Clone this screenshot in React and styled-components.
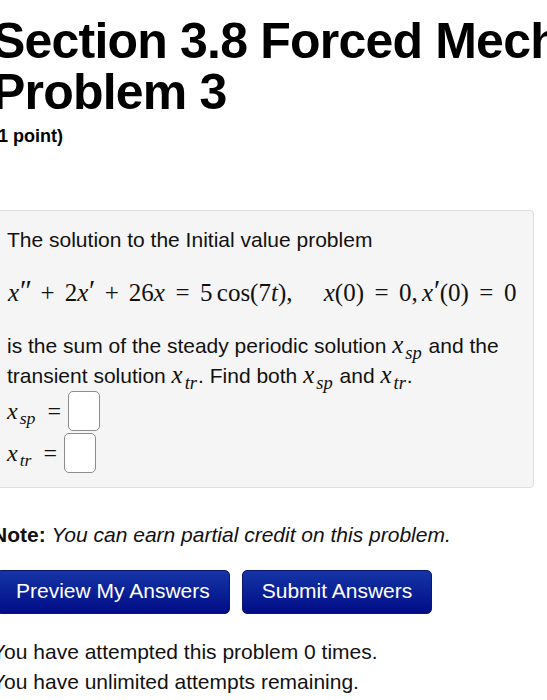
import React from "react";
import styled, { createGlobalStyle } from "styled-components";

const Global = createGlobalStyle`
  html, body {
    margin: 0;
    padding: 0;
    background: #ffffff;
    overflow: hidden;
  }
  body {
    font-family: "Liberation Sans", Arial, sans-serif;
    color: #111;
  }
`;

const Page = styled.div`
  margin-left: -8px;
  width: 542px;
`;

const Title = styled.h1`
  margin: 16px 0 0;
  font-size: 50px;
  line-height: 51px;
  font-weight: 700;
  letter-spacing: -0.8px;
  white-space: nowrap;
  color: #000;
`;

const Points = styled.div`
  margin-top: 6px;
  font-size: 18px;
  line-height: 24px;
  font-weight: 700;
  color: #000;
`;

const ProblemBox = styled.div`
  margin-top: 62px;
  background: #f5f5f5;
  border: 1px solid #dedede;
  border-radius: 4px;
  padding: 14px 14px 12px;
`;

const Text = styled.p`
  margin: 0;
  font-size: 21px;
  line-height: 30px;
`;

const Display = styled.div`
  margin: 23px 0 23px 1px;
  font-family: "Liberation Serif", "Times New Roman", serif;
  font-size: 25px;
  line-height: 30px;
  white-space: nowrap;
`;

const Mi = styled.i`
  font-family: "Liberation Serif", "Times New Roman", serif;
  font-style: italic;
`;

const Prime = styled.span`
  display: inline-block;
  margin-left: 1px;
  transform: scale(1.15);
  transform-origin: left bottom;
`;

const Sub = styled.span`
  font-family: "Liberation Serif", "Times New Roman", serif;
  font-style: italic;
  font-size: 0.74em;
  line-height: 0;
  position: relative;
  top: 0.3em;
  margin-left: 2px;
`;

const Op = styled.span`
  margin: 0 ${(p) => (p.$rel ? "0.42em" : "0.4em")};
`;

const Quad = styled.span`
  display: inline-block;
  width: ${(p) => p.$w || "1em"};
`;

const InlineMath = styled.span`
  font-family: "Liberation Serif", "Times New Roman", serif;
  font-size: 25px;
  line-height: 0;
  margin-right: 1px;
`;

const AnswerRow = styled.div`
  display: flex;
  align-items: flex-start;
  height: 42px;
`;

const AnswerLabel = styled.span`
  font-family: "Liberation Serif", "Times New Roman", serif;
  font-size: 24px;
  line-height: 36px;
  padding-top: 2px;
  white-space: nowrap;
`;

const Eq = styled.span`
  display: inline-block;
  margin: 0 7px 0 12px;
  font-style: normal;
`;

const AnswerInput = styled.span`
  display: inline-block;
  box-sizing: border-box;
  width: 32px;
  height: 40px;
  background: #fff;
  border: 1.5px solid #8c8c8c;
  border-radius: 5px;
`;

const Note = styled.p`
  margin: 32px 0 0;
  font-size: 21px;
  line-height: 30px;
  b {
    font-weight: 700;
  }
  i {
    font-style: italic;
  }
`;

const Buttons = styled.div`
  display: flex;
  gap: 12px;
  margin: 20px 0 0 4px;
`;

const Button = styled.button`
  box-sizing: border-box;
  height: 44px;
  padding: 0 19px 2px;
  border: 1px solid #0a1670;
  border-radius: 5px;
  background: linear-gradient(#1535a6, #000c86);
  color: #fff;
  font-family: "Liberation Sans", Arial, sans-serif;
  font-size: 21px;
  line-height: 40px;
  cursor: pointer;
`;

const Status = styled.div`
  margin-top: 23px;
  font-size: 21px;
  line-height: 30px;
`;

const Var = ({ sub }) => (
  <InlineMath>
    <Mi>x</Mi>
    <Sub>{sub}</Sub>
  </InlineMath>
);

export default function App() {
  return (
    <>
      <Global />
      <Page>
        <Title>
          Section 3.8 Forced Mechanical Vibrations
          <br />
          Problem 3
        </Title>
        <Points>(1 point)</Points>

        <ProblemBox>
          <Text>The solution to the Initial value problem</Text>
          <Display>
            <Mi>x</Mi>
            <Prime>″</Prime>
            <Op>+</Op>2<Mi>x</Mi>
            <Prime>′</Prime>
            <Op>+</Op>26<Mi>x</Mi>
            <Op $rel>=</Op>5<Quad $w="0.17em" />cos(7<Mi>t</Mi>),
            <Quad $w="1.25em" />
            <Mi>x</Mi>(0)<Op $rel>=</Op>0,<Quad $w="0.17em" />
            <Mi>x</Mi>
            <Prime>′</Prime>(0)<Op $rel>=</Op>0
          </Display>
          <Text>
            is the sum of the steady periodic solution <Var sub="sp" /> and the
            transient solution <Var sub="tr" />. Find both <Var sub="sp" /> and{" "}
            <Var sub="tr" />.
          </Text>
          <AnswerRow>
            <AnswerLabel>
              <Mi>x</Mi>
              <Sub>sp</Sub>
              <Eq>=</Eq>
            </AnswerLabel>
            <AnswerInput />
          </AnswerRow>
          <AnswerRow>
            <AnswerLabel>
              <Mi>x</Mi>
              <Sub>tr</Sub>
              <Eq>=</Eq>
            </AnswerLabel>
            <AnswerInput />
          </AnswerRow>
        </ProblemBox>

        <Note>
          <b>Note:</b> <i>You can earn partial credit on this problem.</i>
        </Note>

        <Buttons>
          <Button>Preview My Answers</Button>
          <Button>Submit Answers</Button>
        </Buttons>

        <Status>
          You have attempted this problem 0 times.
          <br />
          You have unlimited attempts remaining.
        </Status>
      </Page>
    </>
  );
}
